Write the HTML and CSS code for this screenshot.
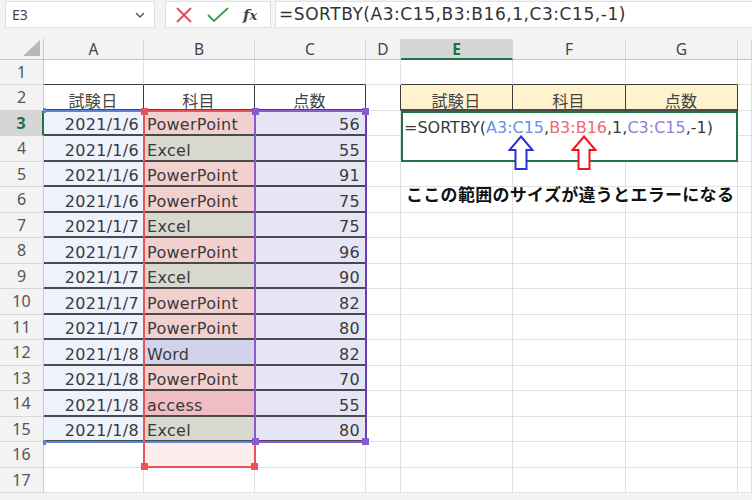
FILE: index.html
```html
<!DOCTYPE html>
<html lang="ja">
<head>
  <meta charset="UTF-8">
  <title>SORTBY</title>
  <link rel="stylesheet" href="styles.css">
</head>
<body>
  <div class="topbar">
    <div class="namebox">
      <span>E3</span>
      <svg width="10" height="6" viewBox="0 0 10 6"><path d="M1 1l4 4 4-4" fill="none" stroke="#555" stroke-width="1.4"/></svg>
    </div>
    <div class="fxbox">
      <svg width="18" height="18" viewBox="0 0 18 18"><path d="M2 2l14 14M16 2L2 16" stroke="#e04a4a" stroke-width="1.8" fill="none"/></svg>
      <svg width="22" height="18" viewBox="0 0 22 18"><path d="M1 9l6 6L21 2" stroke="#3f9a45" stroke-width="1.8" fill="none"/></svg>
      <span class="fx">f<i>x</i></span>
    </div>
    <div class="formula">=SORTBY(A3:C15,B3:B16,1,C3:C15,-1)</div>
  </div>

  <div class="sheet" id="sheet"></div>

  <script>
    const cols = ['A', 'B', 'C', 'D', 'E', 'F', 'G', ''];
    const data = [
      ['2021/1/6', 'PowerPoint', 56],
      ['2021/1/6', 'Excel', 55],
      ['2021/1/6', 'PowerPoint', 91],
      ['2021/1/6', 'PowerPoint', 75],
      ['2021/1/7', 'Excel', 75],
      ['2021/1/7', 'PowerPoint', 96],
      ['2021/1/7', 'Excel', 90],
      ['2021/1/7', 'PowerPoint', 82],
      ['2021/1/7', 'PowerPoint', 80],
      ['2021/1/8', 'Word', 82],
      ['2021/1/8', 'PowerPoint', 70],
      ['2021/1/8', 'access', 55],
      ['2021/1/8', 'Excel', 80],
    ];
    const subjectClass = { PowerPoint: 'pp', Excel: 'xl', Word: 'wd', access: 'ac' };
    const heads = ['試験日', '科目', '点数'];

    let html = '<div class="corner"></div>';
    cols.forEach((c) => {
      html += `<div class="ch${c === 'E' ? ' sel' : ''}">${c}</div>`;
    });

    for (let r = 1; r <= 17; r++) {
      html += `<div class="rh${r === 3 ? ' sel' : ''}">${r}</div>`;

      if (r === 1) {
        html += '<div class="c above"></div>'.repeat(3);
        html += '<div class="c"></div>';
        html += '<div class="c above"></div>'.repeat(3);
        html += '<div class="c"></div>';
      } else if (r === 2) {
        heads.forEach((h) => { html += `<div class="c tb th">${h}</div>`; });
        html += '<div class="c lft"></div>';
        heads.forEach((h) => { html += `<div class="c tb th yl">${h}</div>`; });
        html += '<div class="c"></div>';
      } else if (r <= 15) {
        const [date, subject, score] = data[r - 3];
        html += `<div class="c tb date">${date}</div>`;
        html += `<div class="c tb sub ${subjectClass[subject]}">${subject}</div>`;
        html += `<div class="c tb num">${score}</div>`;
        html += '<div class="c"></div>';
        if (r === 3) {
          html += `<div class="c fcell"><span>=SORTBY(<b class="rb">A3:C15</b>,<b class="rr">B3:B16</b>,1,<b class="rp">C3:C15</b>,-1)</span></div>`;
        } else if (r > 4) {
          html += '<div class="c"></div>'.repeat(3);
        }
        html += '<div class="c"></div>';
      } else {
        html += '<div class="c"></div>';
        html += `<div class="c${r === 16 ? ' b16' : ''}"></div>`;
        html += '<div class="c"></div>'.repeat(6);
      }
    }

    // range outlines drawn over the grid
    html += `
      <div class="range blue"><i class="h tl"></i><i class="h bl"></i></div>
      <div class="range red"><i class="h tl"></i><i class="h bl"></i><i class="h br"></i></div>
      <div class="range purple"><i class="h tl"></i><i class="h tr"></i><i class="h bl"></i><i class="h br"></i></div>
      <svg class="arrow a-blue" width="26" height="36" viewBox="0 0 26 36"><polygon points="13,1.5 24.5,15 18.5,15 18.5,34 7.5,34 7.5,15 1.5,15" fill="#fff" stroke="#2e2ed8" stroke-width="2"/></svg>
      <svg class="arrow a-red" width="26" height="36" viewBox="0 0 26 36"><polygon points="13,1.5 24.5,15 18.5,15 18.5,34 7.5,34 7.5,15 1.5,15" fill="#fff" stroke="#f01414" stroke-width="2"/></svg>
      <div class="note">ここの範囲のサイズが違うとエラーになる</div>
    `;

    document.getElementById('sheet').innerHTML = html;
  </script>
</body>
</html>
```

FILE: styles.css
```css
* {
  box-sizing: border-box;
}
body {
  margin: 0;
  background: #f3f3f3;
  font-family: "Noto Sans", "Noto Sans CJK JP", sans-serif;
  color: #333;
  overflow: hidden;
}
.topbar {
  display: flex;
  padding: 1px 0 0 5px;
  height: 29px;
}
.namebox {
  width: 150px;
  height: 27px;
  background: #fff;
  border: 1px solid #e1e1e1;
  display: flex;
  align-items: center;
  justify-content: space-between;
  padding: 0 9px 0 6px;
  font-size: 14px;
  color: #444;
}
.fxbox {
  margin-left: 10px;
  width: 106px;
  height: 27px;
  background: #fff;
  border: 1px solid #e1e1e1;
  display: flex;
  align-items: center;
  padding-left: 9px;
  gap: 14px;
}
.fx {
  font-family: "DejaVu Serif", serif;
  font-style: italic;
  font-weight: bold;
  font-size: 15px;
  color: #444;
}
.fx i {
  font-size: 13px;
}
.formula {
  margin-left: 4px;
  flex: 1;
  height: 27px;
  background: #fff;
  border: 1px solid #e1e1e1;
  border-right: none;
  padding-left: 3px;
  font-family: "DejaVu Sans", sans-serif;
  font-size: 17px;
  letter-spacing: 0.55px;
  line-height: 25px;
  color: #333;
  white-space: nowrap;
}

.sheet {
  position: relative;
  margin-top: 10px;
  display: grid;
  grid-template-columns: 44px 100px 111px 111px 35px 112px 113px 112px 14px;
  grid-template-rows: 21px repeat(17, 25.47px);
}
.corner {
  background: #f3f3f3;
  border-right: 1px solid #c8c8c8;
  border-bottom: 1px solid #c8c8c8;
  position: relative;
}
.corner::after {
  content: "";
  position: absolute;
  right: 3px;
  bottom: 3px;
  border-left: 17px solid transparent;
  border-bottom: 16px solid #b8b8b8;
}
.ch {
  background: #f3f3f3;
  border-right: 1px solid #d6d6d6;
  border-bottom: 1px solid #c8c8c8;
  text-align: center;
  font-size: 15.5px;
  line-height: 20px;
  color: #444;
}
.ch.sel {
  background: #d6d6d6;
  border-bottom: 2px solid #217346;
  color: #217346;
  font-weight: bold;
}
.rh {
  background: #f3f3f3;
  border-right: 1px solid #c8c8c8;
  border-bottom: 1px solid #d6d6d6;
  text-align: center;
  font-size: 16px;
  line-height: 25px;
  color: #555;
}
.rh.sel {
  background: #d6d6d6;
  border-right: 2px solid #217346;
  color: #217346;
  font-weight: bold;
}
.c {
  background: #fff;
  border-right: 1px solid #e1e1e1;
  border-bottom: 1px solid #e1e1e1;
  font-family: "DejaVu Sans", "Noto Sans CJK JP", sans-serif;
  font-size: 16px;
  line-height: 18px;
  letter-spacing: 0.3px;
  color: #3a3a3a;
  white-space: nowrap;
  overflow: hidden;
  display: flex;
  align-items: flex-end;
  padding: 0 4px 0 3px;
}
.c.above {
  border-bottom-color: #3c3c3c;
}
.c.lft {
  border-right-color: #3c3c3c;
}
.tb {
  border-right-color: #3c3c3c;
  border-bottom: 2px solid #4a4a4a;
}
.th {
  justify-content: center;
  font-family: "Noto Sans CJK JP", sans-serif;
  color: #444;
}
.yl {
  background: #fff2cc;
}
.date {
  justify-content: flex-end;
  background: #edf2fc;
}
.num {
  justify-content: flex-end;
  background: #e5e5f6;
  padding-right: 5px;
}
.sub.pp { background: #f2d0ce; }
.sub.xl { background: #d9d8cf; }
.sub.wd { background: #d2d3ea; }
.sub.ac { background: #efbdc4; }
.b16 {
  background: #fcecec;
}
.fcell {
  grid-column: span 3;
  grid-row: span 2;
  border: 2px solid #217346;
  align-items: flex-start;
  padding: 4px 0 0 1px;
  line-height: 21px;
  letter-spacing: 0;
}
.fcell b {
  font-weight: normal;
}
.rb { color: #6b8fe2; }
.rr { color: #ea6a70; }
.rp { color: #9a7cd2; }

.range {
  position: absolute;
  top: 71px;
}
.range.blue {
  left: 44px;
  width: 323px;
  height: 333px;
  border-top: 2px solid #5b84d8;
  border-bottom: 2px solid #5b84d8;
}
.range.red {
  left: 143px;
  width: 113px;
  height: 358px;
  border: 2px solid #eb5259;
}
.range.purple {
  left: 254px;
  width: 113px;
  height: 333px;
  border: 2px solid #8a5bcc;
  border-right-color: #6b3fb4;
}
.h {
  position: absolute;
  width: 7px;
  height: 7px;
}
.blue .h { background: #5b84d8; width: 3px; height: 5px; }
.red .h { background: #eb5259; }
.purple .h { background: #8a5bcc; }
.h.tl { left: -4px; top: -4px; }
.h.tr { right: -4px; top: -4px; }
.h.bl { left: -4px; bottom: -4px; }
.h.br { right: -4px; bottom: -4px; }
.blue .h.tl, .blue .h.bl { left: -1px; }

.arrow {
  position: absolute;
  top: 96px;
}
.a-blue { left: 508px; }
.a-red { left: 571px; }
.note {
  position: absolute;
  left: 406px;
  top: 142px;
  font-family: "Noto Sans CJK JP", sans-serif;
  font-weight: bold;
  font-size: 17px;
  letter-spacing: 0.3px;
  color: #111;
  white-space: nowrap;
}
```
